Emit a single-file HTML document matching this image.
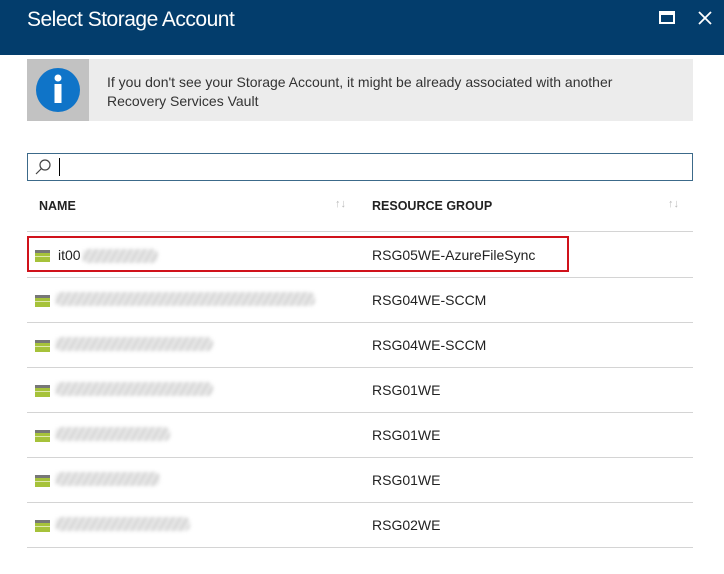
<!DOCTYPE html>
<html><head><meta charset="utf-8"><style>
*{margin:0;padding:0;box-sizing:border-box}
body{width:724px;height:574px;background:#fff;font-family:"Liberation Sans",sans-serif;position:relative;overflow:hidden;color:#222}
.hdr{position:absolute;left:0;top:0;width:724px;height:55px;background:#033d6c}
.hdr .t{position:absolute;left:27px;top:8px;font-size:21px;color:#fff;letter-spacing:-0.5px;font-weight:300}
.info{position:absolute;left:27px;top:59px;width:666px;height:62px;background:#ececec}
.info .ic{position:absolute;left:0;top:0;width:62px;height:62px;background:#c2c2c2}
.info .txt{position:absolute;left:80px;top:14px;font-size:14px;line-height:19px;color:#333}
.search{position:absolute;left:27px;top:153px;width:666px;height:28px;border:1px solid #3c6a8a}
.th{position:absolute;top:199px;font-size:12.5px;font-weight:bold;color:#222}
.line{position:absolute;left:27px;width:666px;height:1px;background:#d4d4d4}
.row{position:absolute;font-size:14px;color:#222}
.sic{position:absolute;left:35px;width:15px;height:12px;background:#a6c23a;border-top:3px solid #777}
.sic:after{content:"";position:absolute;left:0;top:3px;width:15px;height:1px;background:#dfe8b0}
.blur{position:absolute;left:55px;height:14px;background:repeating-linear-gradient(120deg,#b5b5b5 0 2px,#e6e6e6 2px 6px);filter:blur(1.8px);opacity:.75;border-radius:6px}
.sort{position:absolute;top:198px;font-size:11px;color:#bbb}
</style></head><body>
<div class="hdr"><div class="t">Select Storage Account</div>
<div style="position:absolute;left:659px;top:11px;width:16px;height:13px;border:2px solid #fff;border-top-width:4px"></div>
<svg style="position:absolute;left:698px;top:11px" width="14" height="14"><path d="M1 1L13 13M13 1L1 13" stroke="#fff" stroke-width="1.8"/></svg></div>
<div class="info"><div class="ic"><svg width="62" height="62"><circle cx="31" cy="31" r="22" fill="#0f74c8"/><circle cx="31" cy="19" r="3.5" fill="#fff"/><rect x="27.5" y="25" width="7" height="19" fill="#fff"/></svg></div>
<div class="txt">If you don't see your Storage Account, it might be already associated with another<br>Recovery Services Vault</div></div>
<div class="search"><svg style="position:absolute;left:6px;top:4px" width="18" height="18"><circle cx="11" cy="7" r="5" fill="none" stroke="#444" stroke-width="1.2"/><line x1="7.5" y1="10.5" x2="2" y2="16" stroke="#444" stroke-width="1.2"/></svg><div style="position:absolute;left:31px;top:4px;width:1px;height:18px;background:#000"></div></div>
<div class="th" style="left:39px">NAME</div><div class="th" style="left:372px">RESOURCE GROUP</div>
<div class="sort" style="left:335px">↑↓</div><div class="sort" style="left:668px">↑↓</div>
<div class="line" style="top:231px"></div>
<div style="position:absolute;left:27px;top:236px;width:542px;height:36px;border:2px solid #d0121b"></div>
<div class="sic" style="top:250px"></div><div class="row" style="left:58px;top:247px">it00</div><div class="blur" style="left:82px;top:249px;width:76px"></div>
<div class="row" style="left:372px;top:247px">RSG05WE-AzureFileSync</div>
<div class="line" style="top:277px"></div>
<div class="sic" style="top:295px"></div><div class="blur" style="top:292px;width:260px"></div><div class="row" style="left:372px;top:292px">RSG04WE-SCCM</div>
<div class="line" style="top:322px"></div>
<div class="sic" style="top:340px"></div><div class="blur" style="top:337px;width:158px"></div><div class="row" style="left:372px;top:337px">RSG04WE-SCCM</div>
<div class="line" style="top:367px"></div>
<div class="sic" style="top:385px"></div><div class="blur" style="top:382px;width:158px"></div><div class="row" style="left:372px;top:382px">RSG01WE</div>
<div class="line" style="top:412px"></div>
<div class="sic" style="top:430px"></div><div class="blur" style="top:427px;width:115px"></div><div class="row" style="left:372px;top:427px">RSG01WE</div>
<div class="line" style="top:457px"></div>
<div class="sic" style="top:475px"></div><div class="blur" style="top:472px;width:105px"></div><div class="row" style="left:372px;top:472px">RSG01WE</div>
<div class="line" style="top:502px"></div>
<div class="sic" style="top:520px"></div><div class="blur" style="top:517px;width:135px"></div><div class="row" style="left:372px;top:517px">RSG02WE</div>
<div class="line" style="top:547px"></div>
</body></html>
